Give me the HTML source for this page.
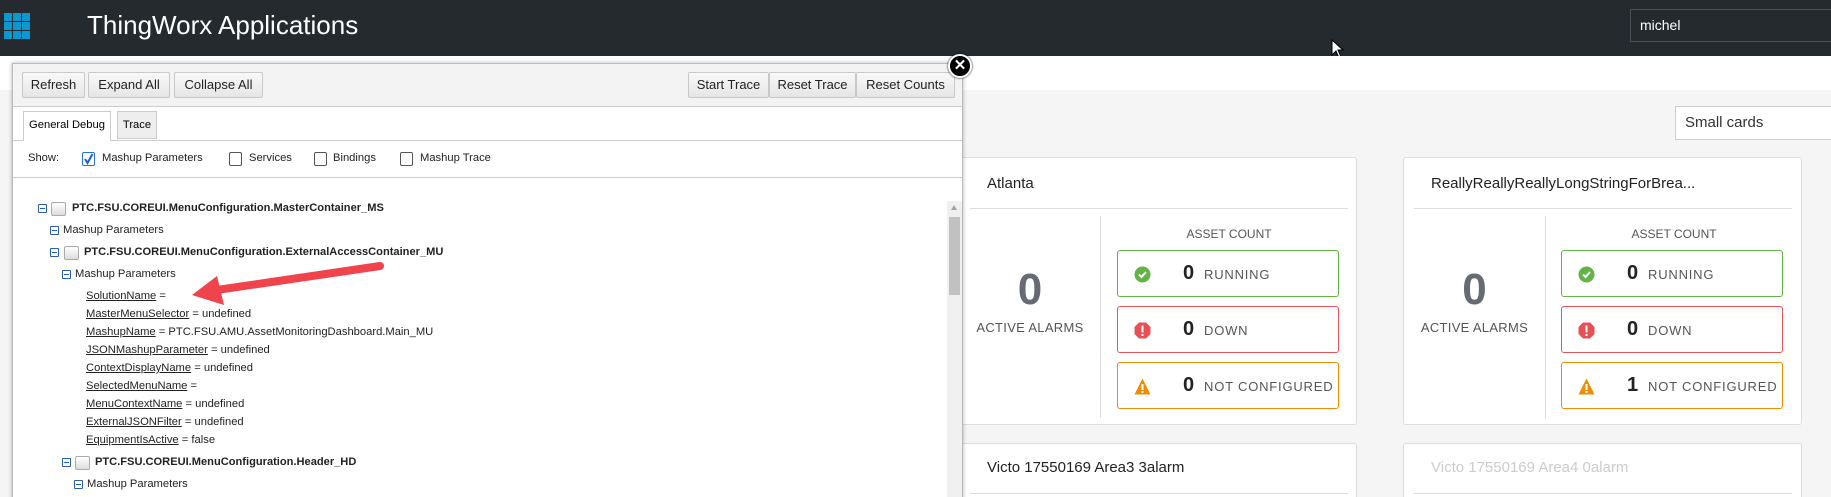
<!DOCTYPE html>
<html><head><meta charset="utf-8"><style>
*{box-sizing:border-box;margin:0;padding:0}
html,body{width:1831px;height:497px;overflow:hidden}
body{background:#f5f5f5;font-family:"Liberation Sans",sans-serif;}
#w{position:relative;width:1831px;height:497px;overflow:hidden}
.a{position:absolute}
.hdr{left:0;top:0;width:1831px;height:56px;background:#242a2d}
.sq{position:absolute;width:8px;height:8px;background:#0b98d0}
.btn{position:absolute;top:72px;height:26px;background:linear-gradient(#f8f8f8,#e6e6e6);border:1px solid #c8c8c8;font-size:13px;color:#222;line-height:24px;text-align:center;border-radius:2px}
.card{position:absolute;background:#fff;border:1px solid #dedede;border-radius:3px}
.box{position:absolute;width:222px;height:47px;background:#fff;border:1px solid;border-radius:3px}
.box .n{position:absolute;left:65px;top:11px;font-size:20px;font-weight:bold;color:#222}
.box .l{position:absolute;left:86px;top:16px;font-size:13px;color:#555;letter-spacing:.8px}
.ic{position:absolute;left:16px;top:15px;width:17px;height:17px}
.t{position:absolute;font-size:11.2px;color:#222;white-space:nowrap}
.b{font-size:11.1px;font-weight:bold}
.t u{text-decoration:underline}
.tg{position:absolute;width:9px;height:9px;border:1px solid #2a5db0;border-radius:1px}
.tg:after{content:"";position:absolute;left:1px;top:3px;width:5px;height:1px;background:#2a5db0}
.bx{position:absolute;width:15px;height:14px;border:1px solid #aaa;border-radius:2px;background:linear-gradient(#fff,#ddd)}
.cb{position:absolute;top:152px;width:13px;height:14px;border:1px solid #555;border-radius:2px;background:#fff}
</style></head><body><div id="w">
<div class="a hdr"></div>
<div class="sq" style="left:4px;top:13px"></div><div class="sq" style="left:13px;top:13px"></div><div class="sq" style="left:22px;top:13px"></div>
<div class="sq" style="left:4px;top:22px"></div><div class="sq" style="left:13px;top:22px"></div><div class="sq" style="left:22px;top:22px"></div>
<div class="sq" style="left:4px;top:31px"></div><div class="sq" style="left:13px;top:31px"></div><div class="sq" style="left:22px;top:31px"></div>
<div class="a" style="left:87px;top:10px;font-size:26px;color:#fff">ThingWorx Applications</div>
<div class="a" style="left:1630px;top:9px;width:201px;height:33px;border:1px solid #4a5257;border-right:none;background:#242a2d;color:#fff;font-size:14px;line-height:31px;padding-left:9px">michel</div>
<div class="a" style="left:0;top:56px;width:1831px;height:34px;background:#fff"></div>
<div class="a" style="left:1675px;top:106px;width:156px;height:34px;border:1px solid #ccc;border-right:none;background:#fff;font-size:15px;line-height:32px;padding-left:9px;color:#333">Small cards</div>
<svg class="a" style="left:1330px;top:38px" width="16" height="18"><path d="M2 2 L2 17 L6 13 L9 20 L11 19 L8 12 L13 12 Z" fill="#fff" stroke="#000" stroke-width="1"/></svg>

<div class="card" style="left:959px;top:157px;width:398px;height:268px">
 <div class="a" style="left:27px;top:17px;font-size:15px;color:#222">Atlanta</div>
 <div class="a" style="left:10px;top:50px;width:378px;height:1px;background:#ddd"></div>
 <div class="a" style="left:140px;top:58px;width:1px;height:202px;background:#ddd"></div>
 <div class="a" style="left:0;top:107px;width:140px;text-align:center;font-size:44px;font-weight:bold;color:#666b73">0</div>
 <div class="a" style="left:0;top:162px;width:140px;text-align:center;font-size:13px;color:#555;letter-spacing:.3px">ACTIVE ALARMS</div>
 <div class="a" style="left:140px;top:69px;width:258px;text-align:center;font-size:12px;color:#555">ASSET COUNT</div>
</div>
<div class="card" style="left:1403px;top:157px;width:399px;height:268px">
 <div class="a" style="left:27px;top:17px;font-size:15px;color:#222">ReallyReallyReallyLongStringForBrea...</div>
 <div class="a" style="left:10px;top:50px;width:378px;height:1px;background:#ddd"></div>
 <div class="a" style="left:141px;top:58px;width:1px;height:202px;background:#ddd"></div>
 <div class="a" style="left:0;top:107px;width:141px;text-align:center;font-size:44px;font-weight:bold;color:#666b73">0</div>
 <div class="a" style="left:0;top:162px;width:141px;text-align:center;font-size:13px;color:#555;letter-spacing:.3px">ACTIVE ALARMS</div>
 <div class="a" style="left:141px;top:69px;width:258px;text-align:center;font-size:12px;color:#555">ASSET COUNT</div>
</div>
<div class="box" style="left:1117px;top:250px;border-color:#62b446"><svg class="ic" viewBox="0 0 17 17"><circle cx="8.5" cy="8.5" r="8" fill="#62b446"/><path d="M5 8.5 L7.5 11 L12 6" stroke="#fff" stroke-width="2" fill="none"/></svg><span class="n">0</span><span class="l">RUNNING</span></div>
<div class="box" style="left:1117px;top:306px;border-color:#e9545a"><svg class="ic" viewBox="0 0 17 17"><polygon points="5,0.5 12,0.5 16.5,5 16.5,12 12,16.5 5,16.5 0.5,12 0.5,5" fill="#ea4f55"/><rect x="7.5" y="3.5" width="2" height="7" fill="#fff"/><rect x="7.5" y="12" width="2" height="2" fill="#fff"/></svg><span class="n">0</span><span class="l">DOWN</span></div>
<div class="box" style="left:1117px;top:362px;border-color:#f08c00"><svg class="ic" viewBox="0 0 17 17"><polygon points="8.5,0.5 16.5,16.5 0.5,16.5" fill="#f08c00"/><rect x="7.5" y="6" width="2" height="6" fill="#fff"/><rect x="7.5" y="13" width="2" height="2" fill="#fff"/></svg><span class="n">0</span><span class="l">NOT CONFIGURED</span></div>
<div class="box" style="left:1561px;top:250px;border-color:#62b446"><svg class="ic" viewBox="0 0 17 17"><circle cx="8.5" cy="8.5" r="8" fill="#62b446"/><path d="M5 8.5 L7.5 11 L12 6" stroke="#fff" stroke-width="2" fill="none"/></svg><span class="n">0</span><span class="l">RUNNING</span></div>
<div class="box" style="left:1561px;top:306px;border-color:#e9545a"><svg class="ic" viewBox="0 0 17 17"><polygon points="5,0.5 12,0.5 16.5,5 16.5,12 12,16.5 5,16.5 0.5,12 0.5,5" fill="#ea4f55"/><rect x="7.5" y="3.5" width="2" height="7" fill="#fff"/><rect x="7.5" y="12" width="2" height="2" fill="#fff"/></svg><span class="n">0</span><span class="l">DOWN</span></div>
<div class="box" style="left:1561px;top:362px;border-color:#f08c00"><svg class="ic" viewBox="0 0 17 17"><polygon points="8.5,0.5 16.5,16.5 0.5,16.5" fill="#f08c00"/><rect x="7.5" y="6" width="2" height="6" fill="#fff"/><rect x="7.5" y="13" width="2" height="2" fill="#fff"/></svg><span class="n">1</span><span class="l">NOT CONFIGURED</span></div>
<div class="card" style="left:959px;top:443px;width:398px;height:60px">
 <div class="a" style="left:27px;top:15px;font-size:15px;color:#222">Victo 17550169 Area3 3alarm</div>
 <div class="a" style="left:10px;top:49px;width:378px;height:1px;background:#ddd"></div></div>
<div class="card" style="left:1403px;top:443px;width:399px;height:60px">
 <div class="a" style="left:27px;top:15px;font-size:15px;color:#ccc">Victo 17550169 Area4 0alarm</div>
 <div class="a" style="left:10px;top:49px;width:378px;height:1px;background:#ddd"></div></div>

<div class="a" style="left:12px;top:63px;width:951px;height:440px;background:#fff;border:1px solid #bbb;box-shadow:0 0 4px rgba(0,0,0,.3)"></div>
<div class="a" style="left:13px;top:64px;width:949px;height:43px;background:#f3f3f3;border-bottom:1px solid #ccc"></div>
<div class="btn" style="left:22px;width:63px">Refresh</div>
<div class="btn" style="left:88px;width:82px">Expand All</div>
<div class="btn" style="left:174px;width:89px">Collapse All</div>
<div class="btn" style="left:688px;width:81px">Start Trace</div>
<div class="btn" style="left:769px;width:87px">Reset Trace</div>
<div class="btn" style="left:856px;width:99px">Reset Counts</div>
<div class="a" style="left:13px;top:140px;width:949px;height:1px;background:#ccc"></div>
<div class="a" style="left:23px;top:111px;width:88px;height:30px;background:#fff;border:1px solid #ccc;border-bottom:none;font-size:11.2px;line-height:26px;text-align:center">General Debug</div>
<div class="a" style="left:117px;top:111px;width:40px;height:28px;background:#eee;border:1px solid #ccc;font-size:11.2px;line-height:26px;text-align:center">Trace</div>
<div class="t" style="left:28px;top:152px">Show:</div>
<div class="cb" style="left:82px;border-color:#2a6fd6"><svg width="11" height="12" style="position:absolute;left:0;top:0"><path d="M2 6 L4.5 10 L9.5 1" stroke="#1a62d0" stroke-width="2" fill="none"/></svg></div>
<div class="t" style="left:102px;top:152px">Mashup Parameters</div>
<div class="cb" style="left:229px"></div><div class="t" style="left:249px;top:152px">Services</div>
<div class="cb" style="left:314px"></div><div class="t" style="left:333px;top:152px">Bindings</div>
<div class="cb" style="left:400px"></div><div class="t" style="left:420px;top:152px">Mashup Trace</div>
<div class="a" style="left:13px;top:177px;width:949px;height:1px;background:#ccc"></div>
<div class="a" style="left:947px;top:201px;width:15px;height:296px;background:#f0f0f0"></div>
<div class="a" style="left:949px;top:217px;width:11px;height:78px;background:#c1c1c1"></div>
<div class="a" style="left:951px;top:205px;width:0;height:0;border-left:3.5px solid transparent;border-right:3.5px solid transparent;border-bottom:5px solid #a3a3a3"></div>
<div class="tg" style="left:38px;top:204px"></div><div class="bx" style="left:51px;top:202px"></div>
<div class="t b" style="left:72px;top:202px">PTC.FSU.COREUI.MenuConfiguration.MasterContainer_MS</div>
<div class="tg" style="left:50px;top:226px"></div><div class="t" style="left:63px;top:224px">Mashup Parameters</div>
<div class="tg" style="left:50px;top:248px"></div><div class="bx" style="left:64px;top:246px"></div>
<div class="t b" style="left:84px;top:246px">PTC.FSU.COREUI.MenuConfiguration.ExternalAccessContainer_MU</div>
<div class="tg" style="left:62px;top:270px"></div><div class="t" style="left:75px;top:268px">Mashup Parameters</div>
<div class="t" style="left:86px;top:290px"><u>SolutionName</u> =</div>
<div class="t" style="left:86px;top:308px"><u>MasterMenuSelector</u> = undefined</div>
<div class="t" style="left:86px;top:326px"><u>MashupName</u> = PTC.FSU.AMU.AssetMonitoringDashboard.Main_MU</div>
<div class="t" style="left:86px;top:344px"><u>JSONMashupParameter</u> = undefined</div>
<div class="t" style="left:86px;top:362px"><u>ContextDisplayName</u> = undefined</div>
<div class="t" style="left:86px;top:380px"><u>SelectedMenuName</u> =</div>
<div class="t" style="left:86px;top:398px"><u>MenuContextName</u> = undefined</div>
<div class="t" style="left:86px;top:416px"><u>ExternalJSONFilter</u> = undefined</div>
<div class="t" style="left:86px;top:434px"><u>EquipmentIsActive</u> = false</div>
<div class="tg" style="left:62px;top:458px"></div><div class="bx" style="left:75px;top:456px"></div>
<div class="t b" style="left:95px;top:456px">PTC.FSU.COREUI.MenuConfiguration.Header_HD</div>
<div class="tg" style="left:74px;top:480px"></div><div class="t" style="left:87px;top:478px">Mashup Parameters</div>
<svg class="a" style="left:0;top:0" width="500" height="400"><line x1="380" y1="266" x2="210" y2="291" stroke="#f0434b" stroke-width="8" stroke-linecap="round"/><polygon points="192,295 217,276 224,305" fill="#f0434b"/></svg>
<div class="a" style="left:948px;top:54px;width:24px;height:24px;border-radius:50%;background:#000;border:2px solid #fff;box-shadow:0 0 2px #000;color:#fff;font-weight:bold;font-size:15px;line-height:19px;text-align:center">✕</div>
</div></body></html>
